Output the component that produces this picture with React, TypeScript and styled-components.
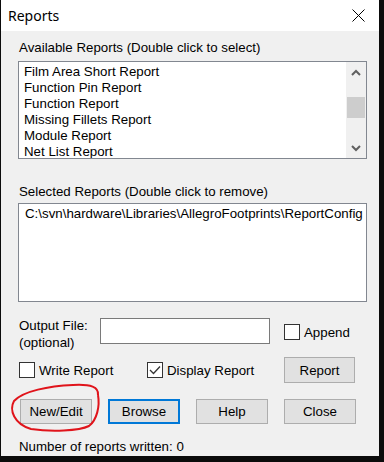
import React from "react";
import styled, { createGlobalStyle } from "styled-components";

const GlobalStyle = createGlobalStyle`
    html, body {
        margin: 0;
        padding: 0;
        background: #0b0b0b;
    }
    body {
        font-family: "Liberation Sans", Arial, sans-serif;
        font-size: 13.3px;
        color: #000;
    }
`

const Window = styled.div`
    position: relative;
    width: 378px;
    height: 456px;
    margin-left: 1px;
    background: #f0f0f0;
    display: flex;
    flex-direction: column;
    overflow: hidden;
`

const TitleBar = styled.div`
    height: 31px;
    flex-shrink: 0;
    background: #fff;
    display: flex;
    align-items: center;
    justify-content: space-between;
    padding: 0 14px 0 7px;
    font-family: "Noto Sans", "Open Sans", sans-serif;
    font-size: 14px;
    box-sizing: border-box;
`

const Body = styled.div`
    display: flex;
    flex-direction: column;
    padding: 0 12px 0 17px;
`

const Label = styled.div<{ top: number }>`
    margin-top: ${(p) => p.top}px;
    padding-left: 1px;
    height: 15px;
    line-height: 15px;
    white-space: nowrap;
`

const ListBox = styled.div<{ height: number; top: number }>`
    margin-top: ${(p) => p.top}px;
    height: ${(p) => p.height}px;
    box-sizing: border-box;
    border: 1px solid #828790;
    background: #fff;
    display: flex;
    overflow: hidden;
`

const Items = styled.ul<{ indent?: number }>`
    flex: 1;
    margin: 0;
    padding: 2px 0 0 ${(p) => p.indent ?? 5}px;
    list-style: none;
    overflow: hidden;
    li {
        height: 16px;
        line-height: 16px;
        white-space: nowrap;
    }
`

const ScrollBar = styled.div`
    width: 20px;
    flex-shrink: 0;
    background: #f0f0f0;
    display: flex;
    flex-direction: column;
    align-items: center;
    .arrow {
        height: 20px;
        display: flex;
        align-items: center;
        justify-content: center;
    }
    .track {
        flex: 1;
        width: 100%;
        padding-top: 15px;
        box-sizing: border-box;
    }
    .thumb {
        margin: 0 auto;
        width: 18px;
        height: 21px;
        background: #cdcdcd;
    }
`

const OutputRow = styled.div`
    margin-top: 14px;
    display: flex;
    align-items: flex-start;
    .output-label {
        width: 81px;
        padding-left: 1px;
        line-height: 17px;
        margin-top: 1px;
    }
`

const TextInput = styled.div`
    width: 170px;
    height: 26px;
    box-sizing: border-box;
    border: 1px solid #7a7a7a;
    background: #fff;
    margin-top: 2px;
`

const CheckRow = styled.div`
    margin-top: 6px;
    display: flex;
    align-items: center;
    height: 26px;
`

const Check = styled.label<{ width?: number; left?: number }>`
    display: flex;
    align-items: center;
    gap: 4px;
    width: ${(p) => (p.width ? `${p.width}px` : "auto")};
    margin-left: ${(p) => p.left ?? 0}px;
    white-space: nowrap;
`

const Box = styled.span`
    width: 16px;
    height: 16px;
    box-sizing: border-box;
    border: 1px solid #333;
    background: #fff;
    display: flex;
    align-items: center;
    justify-content: center;
`

const Button = styled.div<{ primary?: boolean; height?: number }>`
    width: 72px;
    height: ${(p) => p.height ?? 25}px;
    box-sizing: border-box;
    background: #e1e1e1;
    border: ${(p) => (p.primary ? "2px solid #0078d7" : "1px solid #adadad")};
    display: flex;
    align-items: center;
    justify-content: center;
`

const ButtonRow = styled.div`
    margin-top: 16px;
    padding-left: 2px;
    display: grid;
    grid-template-columns: repeat(4, 72px);
    column-gap: 16px;
`

const Status = styled.div`
    margin-top: 15px;
    padding-left: 1px;
    line-height: 15px;
`

const Annotation = styled.svg`
    position: absolute;
    left: 0;
    top: 0;
    pointer-events: none;
`

const availableReports = [
    "Film Area Short Report",
    "Function Pin Report",
    "Function Report",
    "Missing Fillets Report",
    "Module Report",
    "Net List Report",
]

const Chevron = ({ up }: { up?: boolean }) => (
    <svg width="10" height="7" viewBox="0 0 10 7">
        <path
            d={up ? "M1 6 L5 2 L9 6" : "M1 1 L5 5 L9 1"}
            fill="none"
            stroke="#606060"
            strokeWidth="2"
        />
    </svg>
)

const App: React.FC = () => {
    return (
        <>
            <GlobalStyle />
            <Window>
                <TitleBar>
                    <span>Reports</span>
                    <svg width="13" height="13" viewBox="0 0 13 13">
                        <path d="M0.5 0.5 L12.5 12.5 M12.5 0.5 L0.5 12.5" stroke="#000" strokeWidth="1" />
                    </svg>
                </TitleBar>
                <Body>
                    <Label top={9}>Available Reports (Double click to select)</Label>
                    <ListBox top={6} height={98}>
                        <Items>
                            {availableReports.map((r) => (
                                <li key={r}>{r}</li>
                            ))}
                        </Items>
                        <ScrollBar>
                            <div className="arrow"><Chevron up /></div>
                            <div className="track"><div className="thumb" /></div>
                            <div className="arrow"><Chevron /></div>
                        </ScrollBar>
                    </ListBox>
                    <Label top={25}>Selected Reports (Double click to remove)</Label>
                    <ListBox top={4} height={99}>
                        <Items indent={6}>
                            <li>C:\svn\hardware\Libraries\AllegroFootprints\ReportConfig</li>
                        </Items>
                    </ListBox>
                    <OutputRow>
                        <div className="output-label">
                            Output File:<br />(optional)
                        </div>
                        <TextInput />
                        <Check left={14} style={{ marginTop: 8 }}>
                            <Box />
                            Append
                        </Check>
                    </OutputRow>
                    <CheckRow>
                        <Check width={128} left={1}>
                            <Box />
                            Write Report
                        </Check>
                        <Check width={137}>
                            <Box>
                                <svg width="12" height="10" viewBox="0 0 12 10">
                                    <path d="M1 5 L4.5 8.5 L11 1.5" fill="none" stroke="#333" strokeWidth="1.3" />
                                </svg>
                            </Box>
                            Display Report
                        </Check>
                        <Button height={26} style={{ width: 71 }}>Report</Button>
                    </CheckRow>
                    <ButtonRow>
                        <Button>New/Edit</Button>
                        <Button primary>Browse</Button>
                        <Button>Help</Button>
                        <Button>Close</Button>
                    </ButtonRow>
                    <Status>Number of reports written: 0</Status>
                </Body>
                <Annotation width="378" height="456">
                    <path
                        d="M97 395 C98 387, 90 384, 72 385 C48 386, 22 391, 13 401 C8 410, 13 424, 30 429 C50 432, 78 431, 88 426 C96 420, 99 406, 97 395"
                        fill="none"
                        stroke="#e0141b"
                        strokeWidth="2"
                    />
                </Annotation>
            </Window>
        </>
    )
}

export default App
